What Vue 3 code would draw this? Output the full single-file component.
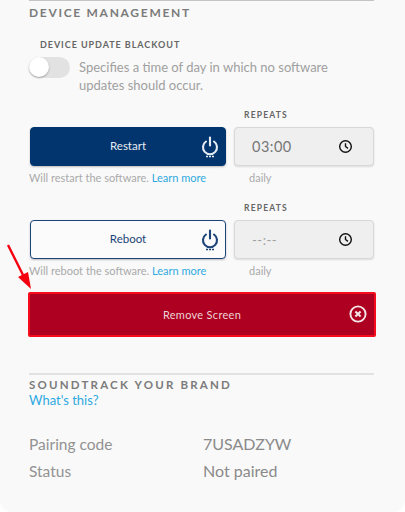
<template>
  <div class="panel">

    <section class="device">
      <h2 class="section-title">DEVICE MANAGEMENT</h2>
      <h3 class="sub-title">DEVICE UPDATE BLACKOUT</h3>
      <div class="blackout">
        <span class="toggle"><span class="knob"></span></span>
        <p>Specifies a time of day in which no software updates should occur.</p>
      </div>

      <div v-for="row in rows" :key="row.label" class="schedule">
        <div class="repeats">REPEATS</div>
        <div class="controls">
          <button class="action" :class="row.kind">
            <span>{{ row.label }}</span>
            <svg class="power" viewBox="0 0 18 24" width="18" height="24" fill="none" stroke="currentColor" stroke-width="2.1" stroke-linecap="round">
              <path d="M5 5.500a7 7 0 1 0 8 0" />
              <path d="M9 1.500v8" />
              <path d="M5 20.500h2M8 20.500h2M11 20.500h2" stroke-width="1.600" stroke-linecap="butt" />
            </svg>
          </button>
          <div class="time">
            <span :class="{ empty: row.time === '--:--' }">{{ row.time }}</span>
            <svg viewBox="0 0 16 16" width="15" height="15" fill="none" stroke="#111" stroke-width="1.500">
              <circle cx="8" cy="8" r="6.200" />
              <path d="M8 4.400V8l2.600 2" />
            </svg>
          </div>
        </div>
        <div class="hints">
          <span class="hint-main">{{ row.hint }} <a>Learn more</a></span>
          <span class="hint-daily">daily</span>
        </div>
      </div>

      <button class="remove">
        <span>Remove Screen</span>
        <svg viewBox="0 0 18 18" width="18" height="18" fill="none" stroke="#f4e6e8" stroke-width="1.900">
          <circle cx="9" cy="9" r="7.600" />
          <path d="M6.400 6.400l5.200 5.200M11.600 6.400l-5.200 5.200" stroke-width="2.100" />
        </svg>
      </button>
    </section>

    <section class="brand">
      <h2 class="section-title">SOUNDTRACK YOUR BRAND</h2>
      <a class="whats">What's this?</a>
      <div class="info">
        <span class="key">Pairing code</span><span class="val">7USADZYW</span>
        <span class="key">Status</span><span class="val">Not paired</span>
      </div>
    </section>

    <svg class="arrow" viewBox="0 0 40 50" width="40" height="50">
      <path d="M8 2L23 32" stroke="#f5000f" stroke-width="2.400" />
      <path d="M31 46L18 34L28 29Z" fill="#f5000f" />
    </svg>
  </div>
</template>

<script setup>
const rows = [
  { label: 'Restart', kind: 'solid', time: '03:00', hint: 'Will restart the software.' },
  { label: 'Reboot', kind: 'outline', time: '--:--', hint: 'Will reboot the software.' },
];
</script>

<style>
html, body {
  margin: 0;
  background: #fff;
}
</style>

<style scoped>
.panel {
  position: relative;
  width: 405px;
  height: 512px;
  box-sizing: border-box;
  padding: 0 31px 0 29px;
  background: #f9f9f9;
  border-radius: 0 0 12px 12px;
  overflow: hidden;
  font-family: Lato, "Open Sans", sans-serif;
  color: #8a8a8a;
}

.device {
  border-top: 1px solid #c4c4c4;
}

.section-title {
  margin: 5px 0 0;
  font-size: 12px;
  line-height: 14px;
  font-weight: 700;
  letter-spacing: 1.700px;
  color: #7b7b7b;
}

.sub-title {
  margin: 19px 0 0 11px;
  font-size: 9px;
  line-height: 11px;
  font-weight: 700;
  letter-spacing: 0.950px;
  color: #666;
}

.blackout {
  display: flex;
  gap: 9px;
  margin-top: 7px;
}

.blackout p {
  margin: 0;
  padding-top: 1px;
  width: 262px;
  font-size: 13px;
  line-height: 18px;
  color: #a0a0a0;
}

.toggle {
  flex: none;
  width: 41px;
  height: 21px;
  border-radius: 11px;
  background: #e2e2e2;
}

.knob {
  display: block;
  width: 20px;
  height: 20px;
  border-radius: 50%;
  background: #fff;
  box-shadow: 0 1px 2px rgba(0, 0, 0, 0.3);
}

.schedule {
  margin-top: 15px;
}

.schedule + .schedule {
  margin-top: 17px;
}

.repeats {
  margin-left: 215px;
  font-size: 8.500px;
  line-height: 12px;
  font-weight: 700;
  letter-spacing: 1.200px;
  color: #666;
}

.controls {
  display: flex;
  gap: 8px;
  margin: 6px 0 0 1px;
}

.action {
  position: relative;
  width: 196px;
  height: 39px;
  box-sizing: border-box;
  padding: 0 0 2px;
  border-radius: 4px;
  font-family: inherit;
  font-size: 11.500px;
  box-shadow: 0 1px 2px rgba(0, 0, 0, 0.25);
}

.action .power {
  position: absolute;
  right: 6px;
  top: 8px;
}

.solid {
  background: #02356e;
  border: 1px solid #02356e;
  color: #e6ecf3;
}

.outline {
  background: #fbfbfb;
  border: 1px solid #1c4479;
  color: #1c4479;
}

.time {
  display: flex;
  align-items: center;
  justify-content: space-between;
  width: 140px;
  height: 39px;
  box-sizing: border-box;
  padding: 0 20px 0 17px;
  border: 1px solid #d8d8d8;
  border-radius: 4px;
  background: #efefef;
  box-shadow: 0 1px 2px rgba(0, 0, 0, 0.12);
  font-size: 14.500px;
  letter-spacing: 0.500px;
  color: #777;
}

.time .empty {
  font-size: 13px;
  color: #a0a0a0;
}

.hints {
  display: flex;
  margin-top: 5px;
  font-size: 11px;
  line-height: 14px;
  color: #aaa;
}

.hint-main {
  width: 220px;
}

.hint-main a {
  color: #2fa9df;
}

.remove {
  display: block;
  position: relative;
  width: 348px;
  height: 45px;
  margin: 14px 0 0 -1px;
  padding: 0;
  border: 2px solid #f60d1b;
  border-radius: 2px;
  background: #ae0020;
  color: #ecd3d7;
  font-family: inherit;
  font-size: 11px;
  letter-spacing: 0.300px;
}

.remove svg {
  position: absolute;
  right: 7px;
  top: 11px;
}

.brand {
  margin-top: 36px;
  border-top: 2px solid #e2e2e2;
}

.brand .section-title {
  margin-top: 3px;
  font-size: 11.500px;
  letter-spacing: 2.200px;
}

.whats {
  display: block;
  margin-top: 1px;
  font-size: 13px;
  line-height: 15px;
  color: #2fa9df;
}

.info {
  display: grid;
  grid-template-columns: 174px auto;
  grid-auto-rows: 27px;
  align-items: center;
  margin-top: 22px;
}

.key {
  font-size: 15.500px;
  color: #929292;
}

.val {
  font-size: 16px;
  color: #8a8a8a;
}

.arrow {
  position: absolute;
  left: 0;
  top: 243px;
}
</style>
